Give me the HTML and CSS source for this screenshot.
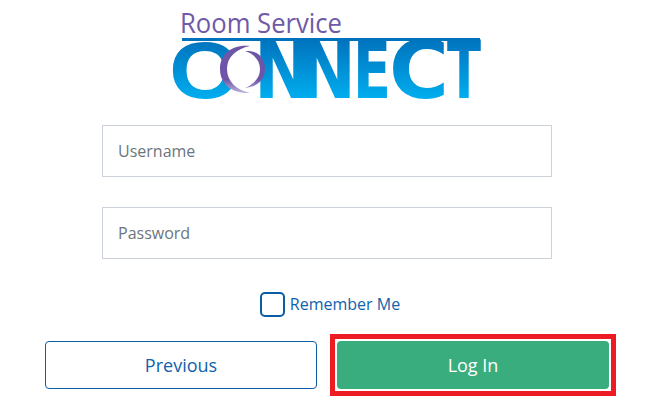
FILE: index.html
```html
<!DOCTYPE html>
<html lang="en">
<head>
<meta charset="utf-8">
<title>Room Service Connect</title>
<link rel="stylesheet" href="styles.css">
</head>
<body>
<main class="page">
  <svg class="logo" viewBox="172 10 310 92" width="310" height="92" role="img" aria-label="Room Service Connect">
    <defs>
      <linearGradient id="blue" gradientUnits="userSpaceOnUse" x1="0" y1="38" x2="0" y2="99">
        <stop offset="0" stop-color="#0071bc"/>
        <stop offset="1" stop-color="#00aeef"/>
      </linearGradient>
      <linearGradient id="ring" gradientUnits="userSpaceOnUse" x1="0" y1="46" x2="0" y2="94">
        <stop offset="0" stop-color="#6d55a8"/>
        <stop offset="0.7" stop-color="#6d55a8"/>
        <stop offset="1" stop-color="#c5bade"/>
      </linearGradient>
    </defs>
    <text class="logo-top" x="180" y="33" textLength="162" lengthAdjust="spacingAndGlyphs">Room Service</text>
    <rect x="182" y="38" width="298" height="3" fill="#0071bc"/>
    <text class="logo-word logo-first" x="169" y="98" textLength="68" lengthAdjust="spacingAndGlyphs" fill="url(#blue)">C</text>
    <ellipse cx="243" cy="69" rx="19" ry="21" fill="#fff"/>
    <text class="logo-word" x="254" y="98" textLength="58" lengthAdjust="spacingAndGlyphs" fill="url(#blue)">N</text>
    <text class="logo-word" x="298" y="98" textLength="58" lengthAdjust="spacingAndGlyphs" fill="url(#blue)">N</text>
    <text class="logo-word" x="353" y="98" textLength="38" lengthAdjust="spacingAndGlyphs" fill="url(#blue)">E</text>
    <text class="logo-word" x="389" y="98" textLength="60" lengthAdjust="spacingAndGlyphs" fill="url(#blue)">C</text>
    <text class="logo-word" x="447" y="98" textLength="34" lengthAdjust="spacingAndGlyphs" fill="url(#blue)">T</text>
    <path d="M250 46 C232 44 220 54 220 69 C220 84 232 94 250 93 C236 90 227 81 227 69 C227 57 236 49 250 46 Z" fill="url(#ring)"/>
    <path d="M245 51 C258 50 265 58 265 69 C265 80 257 87 245 88 C254 84 260 78 260 69 C260 60 254 54 245 51 Z" fill="url(#ring)"/>
  </svg>
  <form class="form">
    <input class="field" type="text" placeholder="Username">
    <input class="field" type="password" placeholder="Password">
    <label class="remember"><span class="box"></span>Remember Me</label>
    <div class="actions">
      <button class="btn secondary" type="button">Previous</button>
      <div class="highlight">
        <button class="btn primary" type="button">Log In</button>
      </div>
    </div>
  </form>
</main>
</body>
</html>
```
FILE: styles.css
```css
* { box-sizing: border-box; }
html, body { margin: 0; background: #fff; }
body { font-family: "Open Sans", sans-serif; overflow: hidden; }
.page { width: 654px; height: 407px; display: flex; flex-direction: column; align-items: center; padding-top: 10px; }
.logo { display: block; flex: none; margin-bottom: 23px; }
.logo-top { font-family: "Open Sans", sans-serif; font-size: 27px; fill: #6f5aa8; }
.logo-word { font-family: "DejaVu Sans", sans-serif; font-weight: 700; font-size: 80px; }
.logo-first { font-family: "Liberation Sans", sans-serif; }
.form { width: 100%; display: flex; flex-direction: column; align-items: center; }
.field { width: 450px; height: 52px; border: 1px solid #ccd2d9; background: #fff; padding: 0 15px; font: 16px "Open Sans", sans-serif; margin-bottom: 30px; outline: none; border-radius: 0; color: #495057; }
.field::placeholder { color: #6c757d; opacity: 1; }
.remember { display: flex; align-items: center; gap: 5px; height: 26px; margin: 2px 0 24px 6px; color: #0f62ab; font-size: 16px; }
.box { width: 25px; height: 25px; border: 2.5px solid #0a5ca5; border-radius: 5px; }
.actions { display: flex; gap: 20px; }
.highlight { border: 5px solid #ed1c24; padding: 2px; margin: -7px; }
.btn { display: block; width: 272px; height: 48px; border-radius: 4px; font: 18px "Open Sans", sans-serif; padding: 0; }
.secondary { background: #fff; border: 1px solid #0a5ca5; color: #0f62ab; }
.primary { background: #3aad7e; border: 0; color: #fff; }
```
